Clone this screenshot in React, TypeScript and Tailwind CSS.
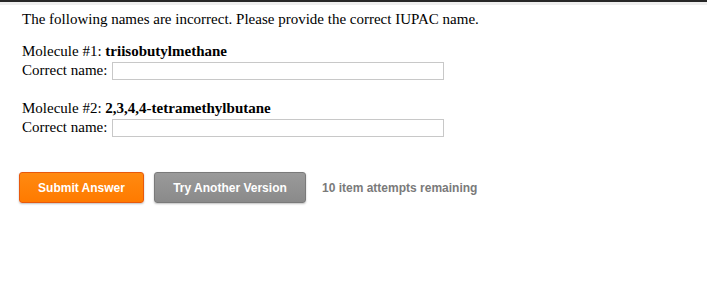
export default function App() {
  const molecules = [
    { label: "Molecule #1:", name: "triisobutylmethane" },
    { label: "Molecule #2:", name: "2,3,4,4-tetramethylbutane" },
  ];
  return (
    <div className="w-[707px] h-[291px] bg-white overflow-hidden">
      <div className="h-[2px] bg-[#262626]" />
      <div className="h-[3px] bg-[#eeeeee]" />
      <div
        className="pl-[22px] pt-[5px] text-[15px] leading-[19px] text-black"
        style={{ fontFamily: '"Liberation Serif", "Times New Roman", serif' }}
      >
        <p>The following names are incorrect. Please provide the correct IUPAC name.</p>
        {molecules.map((m, i) => (
          <div key={i} className={i === 0 ? "mt-[13px]" : "mt-[19px]"}>
            <div>
              {m.label} <b>{m.name}</b>
            </div>
            <div className="flex items-center">
              <span>Correct name:</span>
              <input
                type="text"
                className="ml-[5px] w-[332px] h-[18px] border border-[#c8c8c8] outline-none"
              />
            </div>
          </div>
        ))}
      </div>
      <div
        className="flex items-center pl-[19px] mt-[35px]"
        style={{ fontFamily: '"Liberation Sans", Arial, sans-serif' }}
      >
        <button className="w-[125px] h-[31px] rounded-[3px] border border-[#e8590c] bg-gradient-to-b from-[#ff8a10] to-[#ff7a00] text-white font-bold text-[12px] shadow-[0_1px_2px_rgba(0,0,0,0.25)]">
          Submit Answer
        </button>
        <button className="ml-[10px] w-[152px] h-[31px] rounded-[3px] border border-[#7a7a7a] bg-gradient-to-b from-[#9a9a9a] to-[#8a8a8a] text-white font-bold text-[12px] shadow-[0_1px_2px_rgba(0,0,0,0.25)]">
          Try Another Version
        </button>
        <span className="ml-[16px] text-[12px] font-bold text-[#7a7a7a]">
          10 item attempts remaining
        </span>
      </div>
    </div>
  );
}
